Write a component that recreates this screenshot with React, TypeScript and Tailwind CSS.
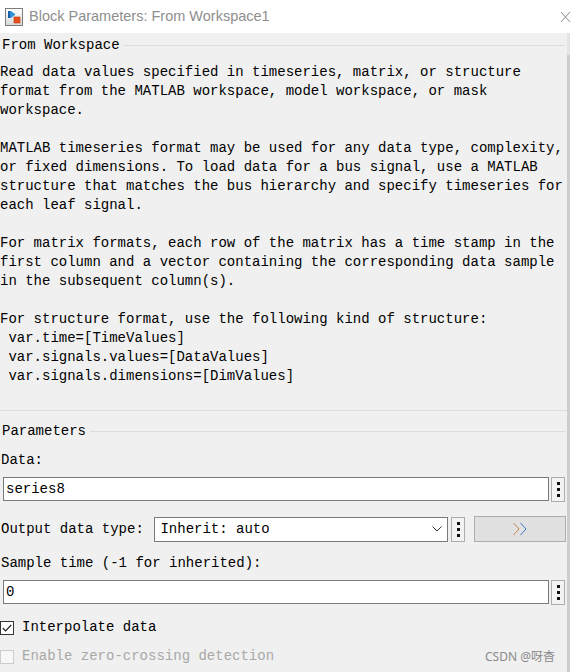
import React from 'react'

const mono = "font-['Liberation_Mono','DejaVu_Sans_Mono',monospace] text-[14px] leading-[19px]"

const description = [
  'Read data values specified in timeseries, matrix, or structure',
  'format from the MATLAB workspace, model workspace, or mask',
  'workspace.',
  '',
  'MATLAB timeseries format may be used for any data type, complexity,',
  'or fixed dimensions. To load data for a bus signal, use a MATLAB',
  'structure that matches the bus hierarchy and specify timeseries for',
  'each leaf signal.',
  '',
  'For matrix formats, each row of the matrix has a time stamp in the',
  'first column and a vector containing the corresponding data sample',
  'in the subsequent column(s).',
  '',
  'For structure format, use the following kind of structure:',
  ' var.time=[TimeValues]',
  ' var.signals.values=[DataValues]',
  ' var.signals.dimensions=[DimValues]',
]

function BlockIcon() {
  return (
    <svg width="18" height="18" viewBox="0 0 18 18">
      <defs>
        <linearGradient id="bg" x1="0" y1="0" x2="0" y2="1">
          <stop offset="0" stopColor="#ffffff" />
          <stop offset="1" stopColor="#d8d8d8" />
        </linearGradient>
      </defs>
      <rect x="0.5" y="0.5" width="17" height="17" fill="url(#bg)" stroke="#7c7c7c" />
      <path d="M3 3 L3 10 L6 10 L10.5 6.5 L6 3 Z" fill="#2f8fd8" />
      <rect x="3" y="3" width="2" height="7" fill="#1b5fa8" />
      <rect x="9" y="9" width="6" height="6" fill="#e8501e" stroke="#b83a10" strokeWidth="0.6" />
    </svg>
  )
}

function GroupHeader({ title }: { title: string }) {
  return (
    <div className="flex items-center h-[22px]">
      <span className="pl-[2px] text-black">{title}</span>
      <div className="flex-1 h-px bg-[#dcdcdc] ml-[4px] mr-[2px]" />
    </div>
  )
}

function DotsButton() {
  return (
    <div className="w-[14px] h-[25px] border border-[#adadad] bg-[#f3f3f3] flex flex-col items-center justify-center gap-[3px] shrink-0">
      <div className="w-[3px] h-[3px] bg-[#111]" />
      <div className="w-[3px] h-[3px] bg-[#111]" />
      <div className="w-[3px] h-[3px] bg-[#111]" />
    </div>
  )
}

function TextField({ value }: { value: string }) {
  return (
    <div className="flex-1 h-[24px] border border-[#7a7a7a] bg-white flex items-center pl-[2px] text-black">
      {value}
    </div>
  )
}

export default function App() {
  return (
    <div className={`relative w-[570px] h-[672px] overflow-hidden bg-[#f0f0f0] ${mono}`}>
      {/* title bar */}
      <div className="h-[33px] bg-white flex items-center pl-[5px]">
        <BlockIcon />
        <span className="ml-[6px] font-['Liberation_Sans',Arial,sans-serif] text-[14.5px] text-[#8e8e8e]">
          Block Parameters: From Workspace1
        </span>
        <svg className="ml-auto mr-[-1px]" width="11" height="12" viewBox="0 0 11 12">
          <path d="M1 1 L10 11 M10 1 L1 11" stroke="#8a8a8a" strokeWidth="1" fill="none" />
        </svg>
      </div>

      <div className="flex">
        <div className="w-[567px]">
          <div className="pt-[1px]">
            <GroupHeader title="From Workspace" />
          </div>
          <div className="mt-[7px] whitespace-pre text-black">
            {description.map((line, i) => (
              <div key={i} className="h-[19px]">{line}</div>
            ))}
          </div>

          <div className="mt-[24px] h-px bg-[#dcdcdc]" />

          <div className="mt-[9px]">
            <GroupHeader title="Parameters" />
          </div>

          <div className="mt-[9px] pl-[1px] text-black">Data:</div>
          <div className="mt-[7px] flex items-start gap-[2px] pl-[3px] pr-[2px]">
            <TextField value="series8" />
            <DotsButton />
          </div>

          <div className="mt-[14px] flex items-center h-[26px] pr-[1px]">
            <span className="w-[155px] pl-[1px] text-black">Output data type:</span>
            <div className="w-[295px] h-[25px] border border-[#7a7a7a] bg-white flex items-center pl-[5px] text-black">
              <span className="flex-1">Inherit: auto</span>
              <svg className="mr-[5px]" width="10" height="6" viewBox="0 0 10 6">
                <path d="M0.5 0.5 L5 5 L9.5 0.5" stroke="#333" strokeWidth="1" fill="none" />
              </svg>
            </div>
            <div className="ml-[3px]">
              <DotsButton />
            </div>
            <div className="ml-[9px] w-[92px] h-[26px] border border-[#adadad] bg-[#e1e1e1] flex items-center justify-center">
              <svg width="16" height="14" viewBox="0 0 16 14">
                <path d="M1.5 1 L7 7 L1.5 13" stroke="#c08a4a" strokeWidth="1" fill="none" />
                <path d="M8.5 1 L14 7 L8.5 13" stroke="#3a7bc8" strokeWidth="1" fill="none" />
              </svg>
            </div>
          </div>

          <div className="mt-[12px] pl-[1px] text-black">Sample time (-1 for inherited):</div>
          <div className="mt-[7px] flex items-start gap-[2px] pl-[3px] pr-[2px]">
            <TextField value="0" />
            <DotsButton />
          </div>

          <div className="mt-[13px] flex items-center h-[19px]">
            <div className="w-[14px] h-[14px] border border-[#333] bg-white flex items-center justify-center">
              <svg width="10" height="8" viewBox="0 0 10 8">
                <path d="M0.8 4 L3.6 6.8 L9.2 1" stroke="#222" strokeWidth="1.2" fill="none" />
              </svg>
            </div>
            <span className="ml-[8px] text-black">Interpolate data</span>
          </div>

          <div className="mt-[10px] flex items-center h-[19px]">
            <div className="w-[14px] h-[14px] border border-[#cccccc] bg-[#f7f7f7]" />
            <span className="ml-[8px] text-[#a8a8a8]">Enable zero-crossing detection</span>
          </div>
        </div>

        <div className="w-[3px] flex flex-col">
          <div className="h-[22px] bg-[#e4e4e4]" />
          <div className="h-[630px] bg-[#cdcdcd]" />
        </div>
      </div>

      <div className="absolute right-[15px] top-[648px] font-['Noto_Sans','Noto_Sans_CJK_SC',sans-serif] text-[12px] leading-[18px] text-[#8a8a8a]">
        CSDN @呀杳
      </div>
    </div>
  )
}
